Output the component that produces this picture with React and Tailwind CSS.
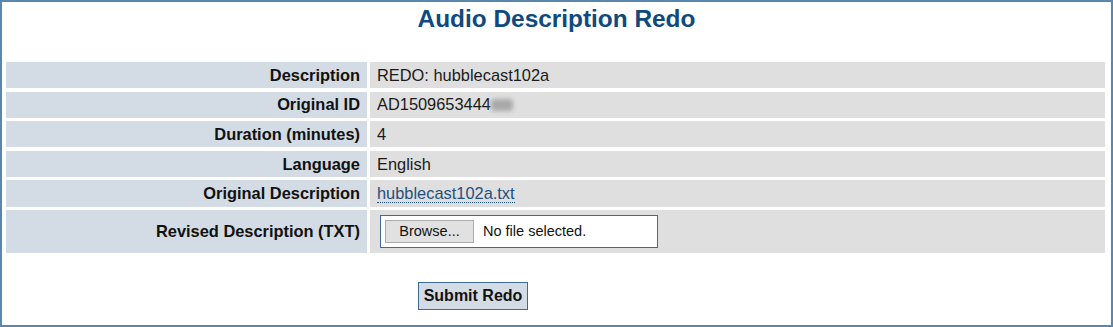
const rows = [
  { label: 'Description', value: 'REDO: hubblecast102a' },
  { label: 'Original ID', value: 'AD1509653444', blur: true },
  { label: 'Duration (minutes)', value: '4' },
  { label: 'Language', value: 'English' },
  { label: 'Original Description', link: 'hubblecast102a.txt' },
];

export default function App() {
  return (
    <div
      className="h-[327px] w-[1113px] border-2 border-[#5a87ae] bg-white text-[16.4px] text-[#111]"
      style={{ fontFamily: '"Liberation Sans", Arial, sans-serif' }}
    >
      <h1 className="pt-[3px] text-center text-[24.4px] font-bold leading-[28px] text-[#0f4a7e]">
        Audio Description Redo
      </h1>

      <div className="ml-[4px] mt-[29px] grid w-[1098px] grid-cols-[361px_735px] gap-x-[3px] gap-y-[3.3px]">
        {rows.map((row) => (
          <div key={row.label} className="contents">
            <div className="flex h-[26.3px] items-center justify-end bg-[#d3dce4] pr-[7px] font-bold">
              {row.label}
            </div>
            <div className="flex h-[26.3px] items-center bg-[#dfdfdf] pl-[7px] text-[#1a1a1a]">
              {row.link ? (
                <a href="#" className="border-b border-dotted border-[#1f4f7f] leading-[17px] text-[#1f4f7f]">
                  {row.link}
                </a>
              ) : (
                <span>
                  {row.value}
                  {row.blur && (
                    <span className="inline-block h-[12px] w-[22px] translate-y-[1px] rounded-sm bg-[#a9a9a9] blur-[2px]" />
                  )}
                </span>
              )}
            </div>
          </div>
        ))}
        <div className="flex h-[43.4px] items-center justify-end bg-[#d3dce4] pr-[7px] font-bold">
          Revised Description (TXT)
        </div>
        <div className="flex h-[43.4px] items-center bg-[#dfdfdf] pl-[10px]">
          <div className="flex h-[33px] w-[278px] items-center border border-[#3f6a9a] bg-white pl-[4px] text-[14.5px]">
            <button className="h-[23px] w-[89px] border border-[#adadad] bg-[#e1e1e1] text-[#111]">
              Browse...
            </button>
            <span className="ml-[9px] text-[#111]">No file selected.</span>
          </div>
        </div>
      </div>

      <div className="mt-[29px] pl-[416px]">
        <button className="h-[28px] w-[110px] border border-[#3c6a9c] bg-[#d3dce4] text-[16px] font-bold text-[#111]">
          Submit Redo
        </button>
      </div>
    </div>
  );
}
